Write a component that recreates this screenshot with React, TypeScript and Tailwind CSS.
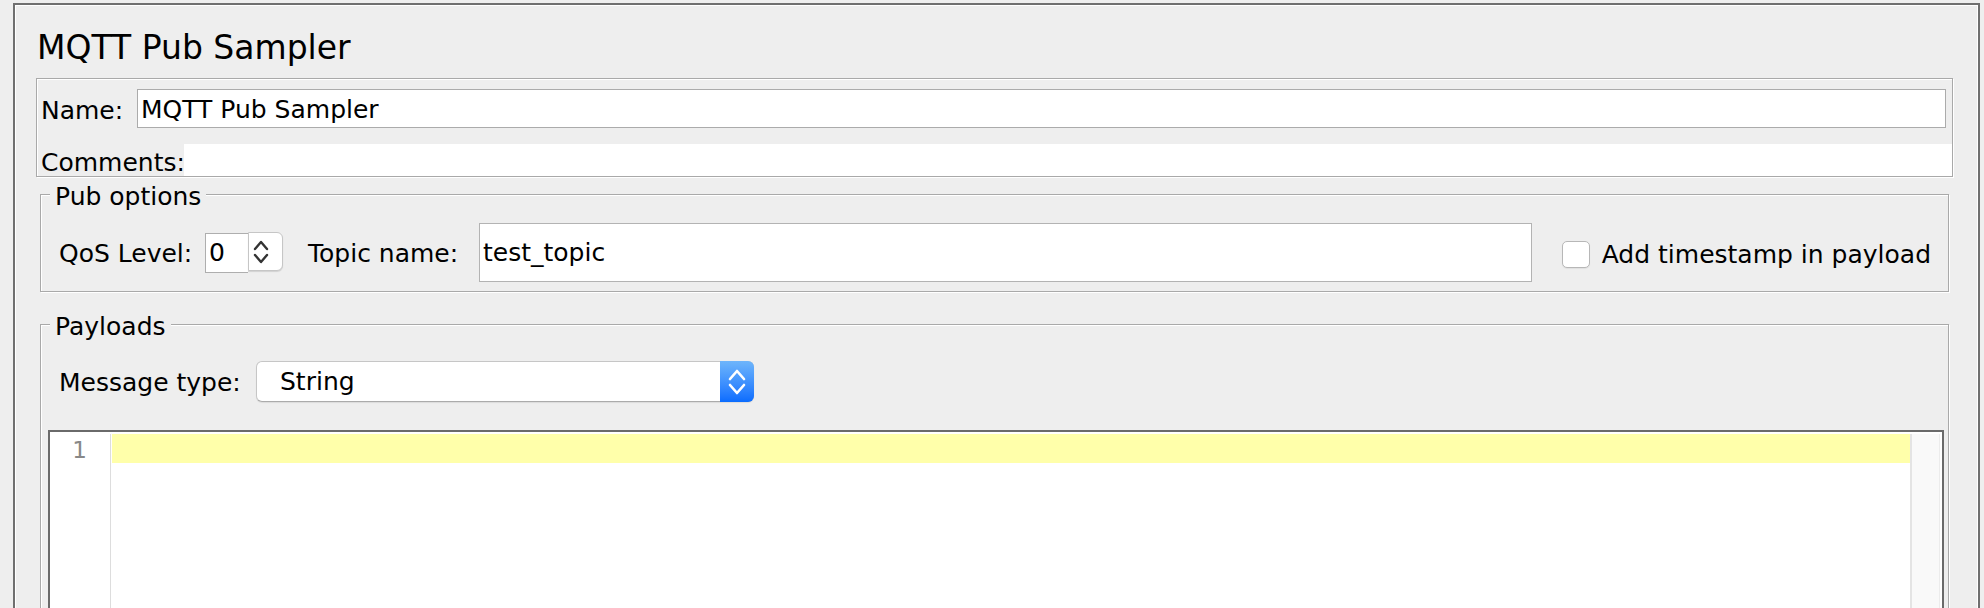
import type { ReactNode } from 'react';

function TitledGroup({ title, className, children }: { title: string; className: string; children: ReactNode }) {
  return (
    <div
      className={`relative ml-[25px] mr-[29px] border border-[#a9a9a9] shadow-[1px_1px_0_#fff,inset_1px_1px_0_#fff] ${className}`}
    >
      <span className="absolute -top-[13px] left-[9px] bg-[#eeeeee] px-[5px] leading-[30px]">{title}</span>
      {children}
    </div>
  );
}

function SpinnerArrows() {
  return (
    <svg width="16" height="26" viewBox="0 0 16 26" fill="none" stroke="#333333" strokeWidth="2.4" strokeLinecap="round" strokeLinejoin="round">
      <polyline points="2,10 8,3 14,10" />
      <polyline points="2,16 8,23 14,16" />
    </svg>
  );
}

function ComboArrows() {
  return (
    <svg width="18" height="28" viewBox="0 0 18 28" fill="none" stroke="#ffffff" strokeWidth="2.6" strokeLinecap="round" strokeLinejoin="round">
      <polyline points="2,11 9,3 16,11" />
      <polyline points="2,17 9,25 16,17" />
    </svg>
  );
}

function NamePanel() {
  return (
    <div className="ml-[21px] mr-[25px] mt-[10px] border border-[#a9a9a9] shadow-[1px_1px_0_#fff,inset_1px_1px_0_#fff]">
      <div className="mt-[10px] flex h-[39px] items-start pl-[4px] pr-[6px]">
        <span className="w-[96px] shrink-0 pt-[2px] leading-[39px]">Name:</span>
        <div className="h-[39px] flex-1 border border-[#ababab] bg-white pl-[3px] pt-[2px] leading-[35px]">
          MQTT Pub Sampler
        </div>
      </div>
      <div className="mt-[16px] flex h-[32px] items-start">
        <span className="w-[147px] shrink-0 pl-[4px] pt-[3px] leading-[32px]">Comments:</span>
        <div className="h-[32px] flex-1 bg-white" />
      </div>
    </div>
  );
}

function PubOptions() {
  return (
    <TitledGroup title="Pub options" className="mt-[17px]">
      <div className="mb-[9px] mt-[28px] flex h-[59px] items-center pl-[18px] pr-[17px]">
        <span className="w-[146px] shrink-0 pt-[3px] leading-[30px]">QoS Level:</span>
        <div className="flex h-[41px] shrink-0 items-start">
          <div className="mt-[1px] h-[40px] w-[43px] border border-r-0 border-[#aeaeae] bg-white pl-[3px] leading-[38px]">0</div>
          <div className="flex h-[39px] w-[35px] items-center rounded-r-[6px] border border-[#c6c6c6] bg-white pl-[4px] shadow-[0_1px_1px_rgba(0,0,0,0.12)]">
            <SpinnerArrows />
          </div>
        </div>
        <span className="ml-[25px] w-[171px] shrink-0 pt-[3px] leading-[30px]">Topic name:</span>
        <div className="h-[59px] min-w-0 flex-1 border border-[#b3b3b3] bg-white pl-[3px] leading-[57px]">test_topic</div>
        <div className="ml-[30px] mt-[3px] h-[27px] w-[28px] shrink-0 rounded-[5px] border border-[#b7b7b7] bg-white shadow-[0_1px_1px_rgba(0,0,0,0.06)]" />
        <span className="ml-[12px] shrink-0 whitespace-nowrap pt-[5px] leading-[30px]">Add timestamp in payload</span>
      </div>
    </TitledGroup>
  );
}

function Payloads() {
  return (
    <TitledGroup title="Payloads" className="mt-[32px] h-[400px]">
      <div className="mt-[36px] flex h-[41px] items-center pl-[18px]">
        <span className="w-[197px] shrink-0 pt-[3px] leading-[30px]">Message type:</span>
        <div className="flex h-[41px] w-[498px] rounded-[6px] border border-[#c6c6c6] border-b-[#ababab] bg-white shadow-[0_1px_1px_rgba(0,0,0,0.08)]">
          <span className="flex-1 pl-[23px] leading-[39px]">String</span>
          <div className="-my-px -mr-px flex h-[41px] w-[34px] items-center justify-center rounded-r-[6px] bg-linear-to-b from-[#6eb5fb] to-[#096cfe]">
            <ComboArrows />
          </div>
        </div>
      </div>

      <div className="ml-[7px] mr-[4px] mt-[28px] flex h-[300px] border-2 border-[#6a6a6a] bg-white pt-[2px]">
        <div className="w-[61px] shrink-0 border-r border-[#dddddd] pr-[23px] text-right font-['DejaVu_Sans',sans-serif] text-[23px] text-[#888888]">
          <div className="pt-[2px] leading-[29px]">1</div>
        </div>
        <div className="flex-1 pl-[1px]">
          <div className="h-[29px] bg-[#ffffaa]" />
        </div>
        <div className="mr-[2px] w-[30px] shrink-0 border-l-2 border-r border-l-[#e4e4e4] border-r-[#ececec] bg-[#f9f9f9]" />
      </div>
    </TitledGroup>
  );
}

export default function App() {
  return (
    <div className="h-[608px] w-[1984px] overflow-hidden bg-[#eeeeee] pl-[13px] pr-[4px] pt-[3px] font-['DejaVu_Sans',sans-serif] text-[25px] text-black">
      <div className="flex h-[700px] flex-col border-2 border-[#6f6f6f] shadow-[inset_1px_1px_0_#fff,inset_-1px_0_0_#fff]">
        <h1 className="pl-[22px] pt-[23px] text-[33px] font-normal leading-[40px]">MQTT Pub Sampler</h1>
        <NamePanel />
        <PubOptions />
        <Payloads />
      </div>
    </div>
  );
}
